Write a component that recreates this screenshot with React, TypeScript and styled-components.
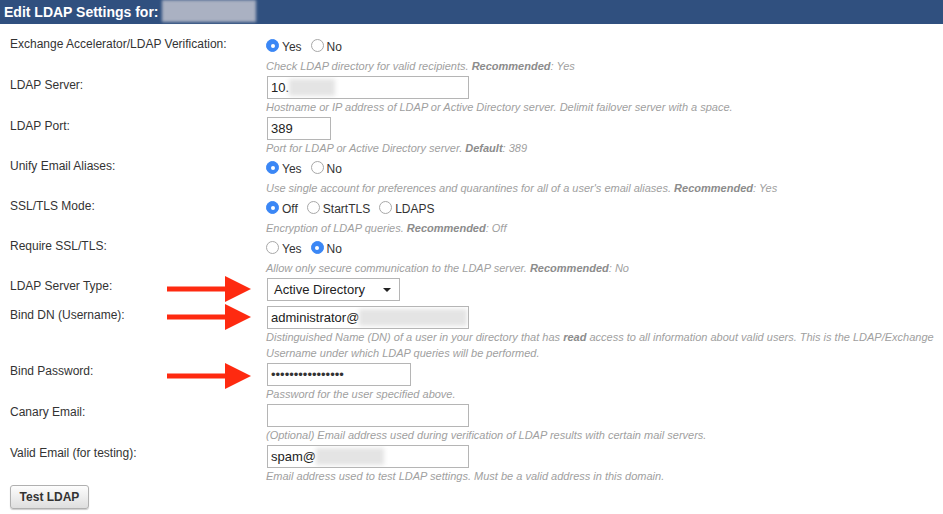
import React from "react";
import styled, { createGlobalStyle } from "styled-components";

const GlobalStyle = createGlobalStyle`
  body {
    margin: 0;
    background: #ffffff;
    font-family: "Liberation Sans", Arial, sans-serif;
    color: #333333;
  }
`;

const Page = styled.div`
  position: relative;
  width: 943px;
  height: 514px;
  overflow: hidden;
`;

const HeaderBar = styled.div`
  height: 24px;
  background: #30507f;
  display: flex;
  align-items: center;
  padding-left: 4px;
  gap: 3px;
`;

const HeaderTitle = styled.h1`
  margin: 0;
  font-size: 14px;
  font-weight: bold;
  color: #ffffff;
  line-height: 24px;
`;

const HeaderRedacted = styled.span`
  width: 94px;
  height: 22px;
  align-self: flex-start;
  background: #aab1c2;
  filter: blur(1.5px);
`;

const Form = styled.div`
  padding: 12px 10px 0 10px;
  display: flex;
  flex-direction: column;
`;

const Row = styled.div<{ $gap?: number }>`
  display: grid;
  grid-template-columns: 256px 1fr;
  margin-bottom: ${(p) => p.$gap ?? 2}px;
`;

const Label = styled.div<{ $top?: number }>`
  font-size: 12px;
  line-height: 14px;
  padding-top: ${(p) => p.$top ?? 1}px;
  color: #333333;
`;

const Value = styled.div`
  display: flex;
  flex-direction: column;
  align-items: flex-start;
`;

const Help = styled.div`
  font-size: 11px;
  line-height: 16px;
  font-style: italic;
  color: #a0a0a0;
  white-space: nowrap;

  b {
    color: #8c8c8c;
  }
`;

const RadioGroup = styled.div`
  display: flex;
  align-items: center;
  height: 22px;
  gap: 9px;
  padding-bottom: 2px;
  box-sizing: border-box;
`;

const RadioOption = styled.label`
  display: flex;
  align-items: center;
  gap: 3px;
  font-size: 12px;
  color: #333333;
  padding-top: 2px;
`;

const RadioDot = styled.span<{ $on?: boolean }>`
  width: 13px;
  height: 13px;
  border-radius: 50%;
  box-sizing: border-box;
  margin-top: -3px;
  background: ${(p) => (p.$on ? "#3b87f5" : "#ffffff")};
  border: 1px solid ${(p) => (p.$on ? "#3b87f5" : "#a8a8a8")};
  display: flex;
  align-items: center;
  justify-content: center;

  &::after {
    content: "";
    width: 4px;
    height: 4px;
    border-radius: 50%;
    background: #ffffff;
    display: ${(p) => (p.$on ? "block" : "none")};
  }
`;

const TextBox = styled.div<{ $w: number }>`
  width: ${(p) => p.$w}px;
  height: 23px;
  box-sizing: border-box;
  border: 1px solid #b5b5b5;
  margin-left: 1px;
  background: #ffffff;
  display: flex;
  align-items: center;
  padding-left: 3px;
  font-size: 13px;
  color: #222222;
  overflow: hidden;
`;

const Redacted = styled.span<{ $w: number }>`
  display: inline-block;
  width: ${(p) => p.$w}px;
  height: 17px;
  background: #e4e4e4;
  filter: blur(2px);
`;

const Dots = styled.span`
  font-size: 13px;
  letter-spacing: 0;
  color: #333333;
`;

const Select = styled.div`
  width: 133px;
  height: 23px;
  box-sizing: border-box;
  border: 1px solid #b5b5b5;
  margin-left: 1px;
  background: #ffffff;
  display: flex;
  align-items: center;
  justify-content: space-between;
  padding: 0 8px 0 6px;
  font-size: 13px;
  color: #222222;
`;

const Caret = styled.span`
  width: 0;
  height: 0;
  border-left: 4px solid transparent;
  border-right: 4px solid transparent;
  border-top: 4px solid #222222;
`;

const Button = styled.button`
  width: 79px;
  height: 24px;
  margin-top: -1px;
  font-family: "Liberation Sans", Arial, sans-serif;
  font-size: 12px;
  font-weight: bold;
  color: #333333;
  background: linear-gradient(#fdfdfd, #dedede);
  border: 1px solid #b0b0b0;
  border-radius: 3px;
  box-shadow: 0 1px 1px rgba(0, 0, 0, 0.2);
`;

const Arrow = styled.svg<{ $y: number }>`
  position: absolute;
  left: 167px;
  top: ${(p) => p.$y - 13}px;
`;

const RedArrow = ({ y }: { y: number }) => (
  <Arrow $y={y} width="86" height="26" viewBox="0 0 86 26">
    <rect x="0" y="10.5" width="62" height="5" fill="#fe2a10" />
    <polygon points="58,0 84,13 58,26" fill="#fe2a10" />
  </Arrow>
);

interface RadioProps {
  options: string[];
  selected: string;
}

const Radios = ({ options, selected }: RadioProps) => (
  <RadioGroup>
    {options.map((o) => (
      <RadioOption key={o}>
        <RadioDot $on={o === selected} />
        {o}
      </RadioOption>
    ))}
  </RadioGroup>
);

const App = () => {
  return (
    <Page>
      <GlobalStyle />
      <HeaderBar>
        <HeaderTitle>Edit LDAP Settings for:</HeaderTitle>
        <HeaderRedacted />
      </HeaderBar>

      <Form>
        <Row>
          <Label>Exchange Accelerator/LDAP Verification:</Label>
          <Value>
            <Radios options={["Yes", "No"]} selected="Yes" />
            <Help>
              Check LDAP directory for valid recipients. <b>Recommended</b>: Yes
            </Help>
          </Value>
        </Row>

        <Row>
          <Label $top={2}>LDAP Server:</Label>
          <Value>
            <TextBox $w={202}>
              10.
              <Redacted $w={46} />
            </TextBox>
            <Help>
              Hostname or IP address of LDAP or Active Directory server. Delimit
              failover server with a space.
            </Help>
          </Value>
        </Row>

        <Row>
          <Label $top={2}>LDAP Port:</Label>
          <Value>
            <TextBox $w={64}>389</TextBox>
            <Help>
              Port for LDAP or Active Directory server. <b>Default</b>: 389
            </Help>
          </Value>
        </Row>

        <Row>
          <Label>Unify Email Aliases:</Label>
          <Value>
            <Radios options={["Yes", "No"]} selected="Yes" />
            <Help>
              Use single account for preferences and quarantines for all of a
              user's email aliases. <b>Recommended</b>: Yes
            </Help>
          </Value>
        </Row>

        <Row>
          <Label>SSL/TLS Mode:</Label>
          <Value>
            <Radios options={["Off", "StartTLS", "LDAPS"]} selected="Off" />
            <Help>
              Encryption of LDAP queries. <b>Recommended</b>: Off
            </Help>
          </Value>
        </Row>

        <Row>
          <Label>Require SSL/TLS:</Label>
          <Value>
            <Radios options={["Yes", "No"]} selected="No" />
            <Help>
              Allow only secure communication to the LDAP server.{" "}
              <b>Recommended</b>: No
            </Help>
          </Value>
        </Row>

        <Row $gap={5}>
          <Label $top={1}>LDAP Server Type:</Label>
          <Value>
            <Select>
              Active Directory
              <Caret />
            </Select>
          </Value>
        </Row>

        <Row>
          <Label $top={2}>Bind DN (Username):</Label>
          <Value>
            <TextBox $w={202}>
              administrator@
              <Redacted $w={108} />
            </TextBox>
            <Help>
              Distinguished Name (DN) of a user in your directory that has{" "}
              <b>read</b> access to all information about valid users. This is
              the LDAP/Exchange
              <br />
              Username under which LDAP queries will be performed.
            </Help>
          </Value>
        </Row>

        <Row>
          <Label $top={1}>Bind Password:</Label>
          <Value>
            <TextBox $w={144}>
              <Dots>••••••••••••••••</Dots>
            </TextBox>
            <Help>Password for the user specified above.</Help>
          </Value>
        </Row>

        <Row>
          <Label $top={1}>Canary Email:</Label>
          <Value>
            <TextBox $w={202} />
            <Help>
              (Optional) Email address used during verification of LDAP results
              with certain mail servers.
            </Help>
          </Value>
        </Row>

        <Row>
          <Label $top={1}>Valid Email (for testing):</Label>
          <Value>
            <TextBox $w={202}>
              spam@
              <Redacted $w={68} />
            </TextBox>
            <Help>
              Email address used to test LDAP settings. Must be a valid address
              in this domain.
            </Help>
          </Value>
        </Row>

        <div>
          <Button>Test LDAP</Button>
        </div>
      </Form>

      <RedArrow y={289} />
      <RedArrow y={317} />
      <RedArrow y={376} />
    </Page>
  );
};

export default App;
